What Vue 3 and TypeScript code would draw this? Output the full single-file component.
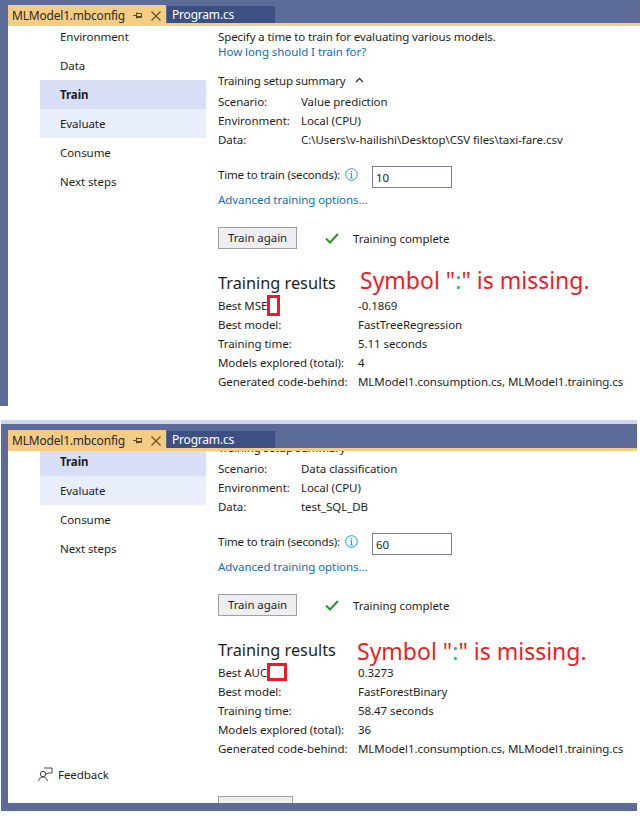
<script setup lang="ts">
interface Row { label: string; value: string }
interface Panel {
  id: string
  second: boolean
  nav: string[]
  summary: Row[]
  seconds: string
  results: Row[]
}

const files = 'MLModel1.consumption.cs, MLModel1.training.cs'

const panels: Panel[] = [
  {
    id: 'a',
    second: false,
    nav: ['Environment', 'Data', 'Train', 'Evaluate', 'Consume', 'Next steps'],
    summary: [
      { label: 'Scenario:', value: 'Value prediction' },
      { label: 'Environment:', value: 'Local (CPU)' },
      { label: 'Data:', value: 'C:\\Users\\v-hailishi\\Desktop\\CSV files\\taxi-fare.csv' },
    ],
    seconds: '10',
    results: [
      { label: 'Best MSE', value: '-0.1869' },
      { label: 'Best model:', value: 'FastTreeRegression' },
      { label: 'Training time:', value: '5.11 seconds' },
      { label: 'Models explored (total):', value: '4' },
      { label: 'Generated code-behind:', value: files },
    ],
  },
  {
    id: 'b',
    second: true,
    nav: ['Train', 'Evaluate', 'Consume', 'Next steps'],
    summary: [
      { label: 'Scenario:', value: 'Data classification' },
      { label: 'Environment:', value: 'Local (CPU)' },
      { label: 'Data:', value: 'test_SQL_DB' },
    ],
    seconds: '60',
    results: [
      { label: 'Best AUC', value: '0.3273' },
      { label: 'Best model:', value: 'FastForestBinary' },
      { label: 'Training time:', value: '58.47 seconds' },
      { label: 'Models explored (total):', value: '36' },
      { label: 'Generated code-behind:', value: files },
    ],
  },
]
</script>

<template>
  <div class="page">
    <section
      v-for="panel in panels"
      :key="panel.id"
      class="panel"
      :class="{ second: panel.second }"
    >
      <header class="tabs">
        <div class="tab active">
          <span class="tab-name">MLModel1.mbconfig</span>
          <svg class="pin" width="10" height="9" viewBox="0 0 10 9" fill="none" stroke="#5c4a22" stroke-width="1">
            <path d="M0 4.500h3.500M3.500 1.500v6M3.500 2.500h5v4h-5M3.500 5.500h5" />
          </svg>
          <svg class="close" width="10" height="10" viewBox="0 0 10 10" fill="none" stroke="#6b5425" stroke-width="1.400">
            <path d="M.5.5l9 9M9.500.5l-9 9" />
          </svg>
        </div>
        <div class="tab inactive">Program.cs</div>
      </header>

      <div class="body">
        <div class="columns">
          <nav class="nav">
            <div
              v-for="item in panel.nav"
              :key="item"
              class="nav-item"
              :class="{ selected: item === 'Train', hover: item === 'Evaluate' }"
            >
              {{ item }}
            </div>
          </nav>

          <main class="content">
            <template v-if="!panel.second">
              <p class="line intro">Specify a time to train for evaluating various models.</p>
              <a class="line link">How long should I train for?</a>
            </template>

            <div class="summary-head">
              <span>Training setup summary</span>
              <svg width="9" height="6" viewBox="0 0 9 6" fill="none" stroke="#333" stroke-width="1.300">
                <path d="M1 5l3.500-3.500L8 5" />
              </svg>
            </div>
            <div v-for="row in panel.summary" :key="row.label" class="row summary-row">
              <span class="key">{{ row.label }}</span>
              <span>{{ row.value }}</span>
            </div>

            <div class="time-row">
              <span class="time-label">Time to train (seconds):</span>
              <svg class="info" width="13" height="13" viewBox="0 0 13 13" fill="none" stroke="#1c9ae0">
                <circle cx="6.500" cy="6.500" r="5.800" />
                <path d="M6.500 5.500v4.500M5.200 10h2.600M5.300 5.500h1.200" />
                <path d="M6.500 3v1.200" stroke-width="1.300" />
              </svg>
              <span class="input">{{ panel.seconds }}</span>
            </div>
            <a class="line link advanced">Advanced training options...</a>

            <div class="action-row">
              <span class="button">Train again</span>
              <svg class="check" width="14" height="11" viewBox="0 0 14 11" fill="none" stroke="#388a34" stroke-width="2">
                <path d="M1 5.500l4 4L13 1" />
              </svg>
              <span>Training complete</span>
            </div>

            <div class="results-head">
              <h2>Training results</h2>
              <span class="note">Symbol "<span class="colon">:</span>" is missing.</span>
            </div>
            <div v-for="(row, index) in panel.results" :key="row.label" class="row result-row">
              <span class="key">
                {{ row.label }}
                <span v-if="index === 0" class="marker"></span>
              </span>
              <span>{{ row.value }}</span>
            </div>

            <span v-if="panel.second" class="next-button"></span>
          </main>
        </div>

        <div v-if="panel.second" class="feedback">
          <svg width="15" height="15" viewBox="0 0 15 15" fill="none" stroke="#444" stroke-width="1">
            <circle cx="5" cy="7" r="2.700" />
            <path d="M.5 14c.6-2.500 2.300-4 4.500-4s3.900 1.500 4.500 4" />
            <path d="M6 1h8v5H9.500L7.500 8V6" />
          </svg>
          <span>Feedback</span>
        </div>
      </div>
    </section>
  </div>
</template>

<style>
html,
body {
  margin: 0;
  background: #fff;
}
</style>

<style scoped>
.page {
  width: 642px;
  height: 816px;
  overflow: hidden;
  background: #fff;
  font-family: "Noto Sans", "Open Sans", sans-serif;
  font-size: 11.500px;
  letter-spacing: -0.06px;
  color: #1e1e1e;
}

.panel {
  position: relative;
  width: 640px;
  height: 406px;
  box-sizing: border-box;
  padding: 0 0 0 8px;
  background: #5d6b99;
  display: flex;
  flex-direction: column;
}

.panel.second {
  width: 636px;
  height: 391px;
  margin: 14px 0 0 1px;
  padding: 0 0 8px 7px;
  border-top: 4px solid #ccd5f0;
}

.tabs {
  flex: none;
  height: 26px;
  box-sizing: border-box;
  display: flex;
  align-items: flex-end;
  gap: 1px;
  padding-top: 5px;
  border-bottom: 3px solid #f5cc84;
}

.second .tabs {
  height: 27px;
  padding-top: 6px;
}

.tab {
  display: flex;
  align-items: center;
  box-sizing: border-box;
  font-size: 12px;
  letter-spacing: -0.2px;
}

.tab.active {
  width: 158px;
  height: 21px;
  margin-bottom: -3px;
  padding: 0 5px 0 4px;
  background: #f5cc84;
  color: #2a2a2a;
}

.tab-name {
  flex: 1;
}

.pin {
  margin-right: 8px;
}

.tab.inactive {
  width: 108px;
  height: 17px;
  padding-left: 5px;
  background: #3d5084;
  color: #fff;
}

.body {
  position: relative;
  flex: 1;
  min-height: 0;
  overflow: hidden;
  background: #fff;
}

.columns {
  display: flex;
  align-items: flex-start;
}

.nav {
  flex: none;
  width: 166px;
  margin: -4px 0 0 32px;
}

.nav-item {
  height: 29px;
  line-height: 29px;
  padding-left: 20px;
}

.nav-item.selected {
  background: #d9def7;
  font-weight: 700;
}

.nav-item.hover {
  background: #e8eefc;
}

.content {
  margin-left: 12px;
  padding-top: 3px;
  flex: 1;
  min-width: 0;
}

.second .content {
  margin-top: -12px;
  padding-top: 0;
}

.line {
  display: block;
  margin: 0;
  height: 16px;
  line-height: 16px;
  white-space: nowrap;
}

.intro {
  height: 15px;
  letter-spacing: -0.11px;
}

.link {
  color: #0f6cbd;
}

.summary-head {
  display: flex;
  align-items: center;
  gap: 9px;
  height: 16px;
  margin-top: 12px;
  margin-bottom: 4px;
  letter-spacing: -0.18px;
}

.second .summary-head {
  margin-top: 0;
}

.row {
  display: flex;
  height: 19px;
  line-height: 19px;
  white-space: nowrap;
}

.summary-row .key {
  width: 83px;
}

.result-row .key {
  position: relative;
  width: 140px;
}

.time-row {
  display: flex;
  align-items: center;
  height: 22px;
  margin-top: 17px;
}

.time-label {
  width: 127px;
  margin-top: -6px;
  letter-spacing: -0.17px;
  white-space: nowrap;
}

.info {
  margin-top: -6px;
}

.input {
  box-sizing: border-box;
  width: 80px;
  height: 22px;
  margin-left: 14px;
  padding-left: 3px;
  line-height: 21px;
  border: 1px solid #7a8094;
}

.advanced {
  margin-top: 4px;
}

.action-row {
  display: flex;
  align-items: center;
  height: 22px;
  margin-top: 19px;
}

.button {
  box-sizing: border-box;
  width: 79px;
  height: 22px;
  line-height: 20px;
  text-align: center;
  background: #eeeef2;
  border: 1px solid #a0a0a0;
}

.check {
  margin-left: 28px;
  margin-right: 14px;
}

.results-head {
  display: flex;
  align-items: center;
  height: 24px;
  margin-top: 22px;
  margin-bottom: 1px;
}

h2 {
  margin: 0;
  width: 142px;
  font-size: 16.300px;
  font-weight: 400;
  letter-spacing: 0;
  white-space: nowrap;
}

.note {
  margin-top: -7px;
  font-size: 23px;
  letter-spacing: 0;
  color: #ed1c24;
  white-space: nowrap;
}

.colon {
  color: #22b573;
}

.second .note {
  margin-left: -3px;
  margin-top: 1px;
}

.marker {
  position: absolute;
  left: 49px;
  top: -1px;
  width: 13px;
  height: 21px;
  box-sizing: border-box;
  border: 3px solid #ed1c24;
}

.second .marker {
  width: 20px;
  height: 18px;
  top: 0;
}

.next-button {
  display: block;
  box-sizing: border-box;
  width: 75px;
  height: 22px;
  margin-top: 38px;
  background: #eeeef2;
  border: 1px solid #a0a0a0;
}

.feedback {
  position: absolute;
  left: 30px;
  bottom: 21px;
  display: flex;
  align-items: center;
  gap: 5px;
}
</style>
